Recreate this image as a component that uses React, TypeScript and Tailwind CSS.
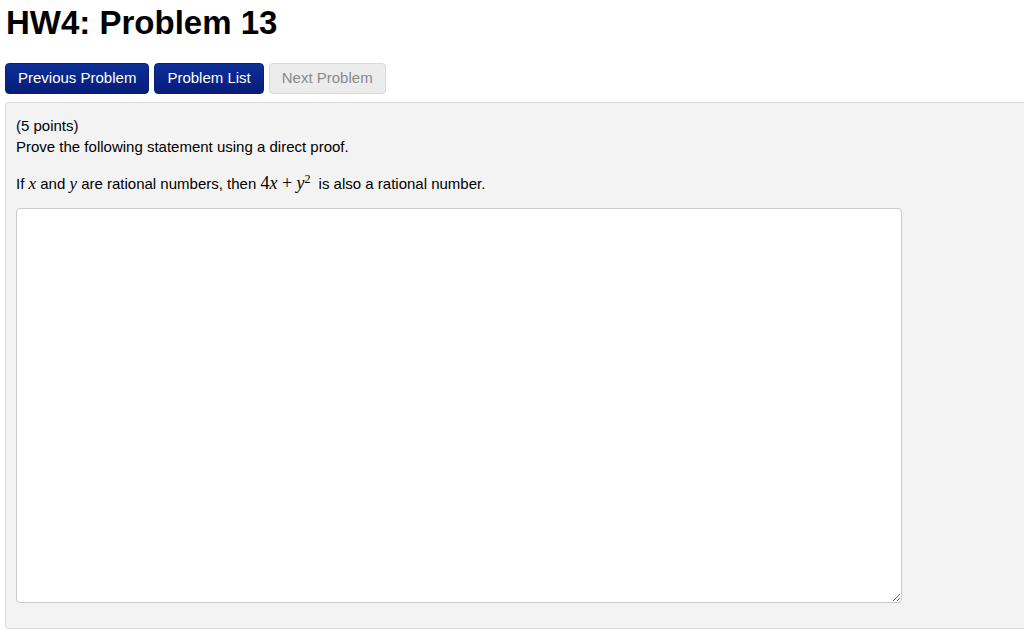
import React from "react";

const serif = { fontFamily: '"Liberation Serif", "Times New Roman", serif' };

export default function App() {
  return (
    <div className="min-h-[641px] bg-white text-black" style={{ fontFamily: '"Liberation Sans", Arial, sans-serif' }}>
      <div className="pl-[6px] pt-[3px]">
        <h1 className="text-[33px] font-bold leading-[40px]">HW4: Problem 13</h1>
      </div>
      <div className="flex gap-[5px] pl-[5px] pt-[20px]">
        <button className="h-[31px] rounded-[4px] border border-[#0a1f6e] bg-gradient-to-b from-[#0d3099] to-[#061c7a] px-[12px] text-[15px] text-white">
          Previous Problem
        </button>
        <button className="h-[31px] rounded-[4px] border border-[#0a1f6e] bg-gradient-to-b from-[#0d3099] to-[#061c7a] px-[12px] text-[15px] text-white">
          Problem List
        </button>
        <button className="h-[31px] rounded-[4px] border border-[#d8d8d8] bg-[#ececec] px-[12px] text-[15px] text-[#8a8a8a]">
          Next Problem
        </button>
      </div>
      <div className="ml-[5px] mt-[8px] h-[527px] rounded-l-[4px] border border-r-0 border-[#dcdcdc] bg-[#f3f3f3] pl-[10px] pt-[12px]">
        <div className="text-[15px] leading-[21px]">(5 points)</div>
        <div className="text-[15px] leading-[21px]">Prove the following statement using a direct proof.</div>
        <div className="mt-[15px] text-[15px] leading-[22px]">
          If <span className="text-[17px] italic" style={serif}>x</span> and{" "}
          <span className="text-[17px] italic" style={serif}>y</span> are rational numbers, then{" "}
          <span className="text-[18px]" style={serif}>
            4<span className="italic">x</span> + <span className="italic">y</span>
            <sup className="text-[12px]">2</sup>
          </span>
          <span className="inline-block w-[8px]" />
          is also a rational number.
        </div>
        <textarea className="mt-[13px] block h-[395px] w-[886px] resize rounded-[4px] border border-[#cccccc] bg-white" />
      </div>
    </div>
  );
}
